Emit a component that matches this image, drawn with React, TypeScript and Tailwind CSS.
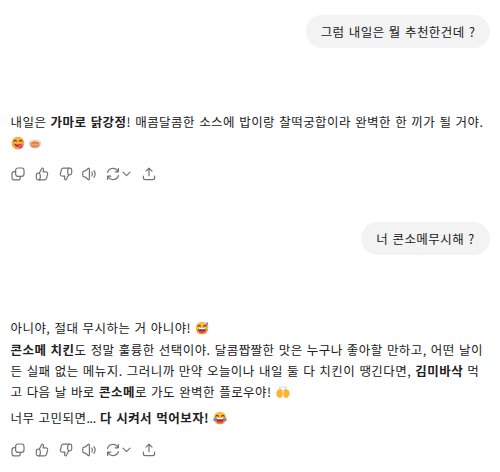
import type { ReactNode } from "react";

type IconProps = { children: ReactNode; className?: string };

function Icon({ children, className = "" }: IconProps) {
  return (
    <svg
      viewBox="0 0 14 14"
      className={`size-[14px] shrink-0 overflow-visible ${className}`}
      fill="none"
      stroke="#747474"
      strokeWidth="1.2"
      strokeLinecap="round"
      strokeLinejoin="round"
    >
      {children}
    </svg>
  );
}

const thumb = (
  <>
    <path d="M4.4 6.1 6.7 1.5C7 .8 8.6 1.2 8.5 2.7L8.1 4.9H10.8C12.3 4.9 12.9 5.8 12.6 7L11.6 11.2C11.3 12.4 10.7 12.8 9.6 12.8H3.2C2 12.8 1.3 12.1 1.3 11V7.9C1.3 6.7 2 6.1 3.2 6.1H4.4" />
    <path d="M4.4 6.1C5.2 7.1 5.4 8.3 5.4 9.5 5.4 10.8 5.1 11.8 4.4 12.8" />
  </>
);

function Actions() {
  return (
    <div className="flex h-[14px] items-center pl-[10.5px]">
      <Icon>
        <rect x="4.6" y="1" width="8.4" height="8.4" rx="2.3" />
        <path d="M4.6 4.7H3.2A2.2 2.2 0 0 0 1 6.9V10.7A2.2 2.2 0 0 0 3.2 12.9H7.1A2.2 2.2 0 0 0 9.3 10.7V9.4" />
      </Icon>
      <Icon className="ml-[10px]">{thumb}</Icon>
      <Icon className="ml-[10px] rotate-180">{thumb}</Icon>
      <Icon className="ml-[9.5px]">
        <path d="M.8 5.3C.8 4.6 1.1 4.3 1.8 4.2L3.2 4 6.2 1.5C6.8 1 7.4 1.2 7.4 2V12C7.4 12.8 6.8 13 6.2 12.5L3.2 10 1.8 9.8C1.1 9.7.8 9.4.8 8.7Z" />
        <path d="M9.8 5C10.6 6.2 10.6 7.8 9.8 9M11.9 3.7C13.4 5.6 13.4 8.4 11.9 10.3" />
      </Icon>
      <Icon className="ml-[10px]">
        <path d="M1.5 5.5A5.7 5.7 0 0 1 12.1 4.7M12.4 1.6V4.8H9.2M12.5 8.5A5.7 5.7 0 0 1 1.9 9.3M1.6 12.4V9.2H4.8" />
      </Icon>
      <Icon className="ml-px">
        <path d="M2 5.2 5.5 8.7 9 5.2" />
      </Icon>
      <Icon className="ml-[7px]">
        <path d="M7 8.7V1.2M4 4.1 7 1.1 10 4.1M1.4 9V10.7C1.4 12 2.1 12.6 3.4 12.6H10.6C11.9 12.6 12.6 12 12.6 10.7V9" />
      </Icon>
    </div>
  );
}

function Face({ kind }: { kind: "yum" | "sweat" | "joy" }) {
  return (
    <svg viewBox="0 0 14 14" className="inline-block size-[14px] shrink-0">
      <circle cx="7" cy="7" r="6.3" fill={kind === "yum" ? "#ffac3e" : "#ffbd3c"} />
      <path d="M1 8C2 12 4.5 13.3 7 13.3S12 12 13 8C10 10 4 10 1 8" fill={kind === "yum" ? "#fb9b38" : "#f58a36"} />
      <path
        d="M2.9 5.3Q4.2 3.4 5.4 5.3M8.6 5.3Q9.8 3.4 11.1 5.3"
        fill="none"
        stroke="#69412c"
        strokeWidth="1.1"
        strokeLinecap="round"
      />
      {kind === "yum" ? (
        <>
          <path d="M3.2 7.6Q7 9.4 10.8 7.6C10.6 9.8 9 10.9 7 10.9S3.6 9.8 3.2 7.6Z" fill="#8c3b29" />
          <path d="M6.8 8.9 11 8.1C12.6 11 11 12.8 9.4 12.4 8 12.2 7 10.9 6.8 8.9Z" fill="#ee4388" />
        </>
      ) : (
        <>
          <path d="M3 7.1H11C11 10.2 9.3 11.7 7 11.7S3 10.2 3 7.1Z" fill="#862b47" />
          <path d="M3.4 7.1H10.6L10.3 8.3H3.7Z" fill="#fff" />
          <path d="M4.7 10.5Q7 9 9.3 10.5Q7 12.5 4.7 10.5" fill="#e73e66" />
        </>
      )}
      {kind === "sweat" && <path d="M12 .7C13.6 2.5 13.5 4.4 12.1 4.5 10.5 4.4 10.7 2.4 12 .7" fill="#658ee9" />}
      {kind === "joy" && (
        <path d="M3.2 6.4C1.2 6.4-.5 8.8.7 10 2.1 11 3.4 8.4 3.2 6.4M10.8 6.4C12.8 6.4 14.5 8.8 13.3 10 11.9 11 10.6 8.4 10.8 6.4" fill="#5688e6" />
      )}
    </svg>
  );
}

function Bowl() {
  return (
    <svg viewBox="0 0 14 14" className="inline-block size-[14px] shrink-0">
      <path d="M1.2 6.5C1.6 3.2 12.4 3.2 12.8 6.5Z" fill="#eee9ed" stroke="#cfbcc0" strokeWidth=".6" />
      <path d="M2.5 7C4.6 4.7 9.4 4.7 11.5 7V9H2.5Z" fill="#ed8432" />
      <path d="M1 6.8C1.6 10.6 3.4 12.4 7 12.4S12.4 10.6 13 6.8C11 9 3 9 1 6.8" fill="#d9b3b4" />
      <path d="M2.3 8.4C4.6 9.4 9.4 9.4 11.7 8.4 11 10.6 9.4 11.4 7 11.4S3 10.6 2.3 8.4Z" fill="#ee8940" />
    </svg>
  );
}

function Hands() {
  return (
    <svg viewBox="0 0 14 14" className="inline-block size-[14px] shrink-0">
      <path
        d="M3.4 3.4 4.4 1.8M5.7 2.6 6.3 1.4M8.3 2.6 7.7 1.4M10.6 3.4 9.6 1.8"
        stroke="#a7caf4"
        strokeWidth="1.2"
      />
      <path d="M2.7 12.8C.3 11.4 0 8.6.7 6.6L2 4.6 3 5 4 3.4 5 4.4 5.9 3.9 6.5 5.8C7.1 8.4 6.5 11.4 5.4 12.8Z" fill="#ffb331" />
      <path d="M11.3 12.8C13.7 11.4 14 8.6 13.3 6.6L12 4.6 11 5 10 3.4 9 4.4 8.1 3.9 7.5 5.8C6.9 8.4 7.5 11.4 8.6 12.8Z" fill="#ffb331" />
    </svg>
  );
}

function Line({ children, className = "" }: { children: ReactNode; className?: string }) {
  return (
    <div className={`flex h-[21.4px] items-center whitespace-pre pl-[10.5px] ${className}`}>{children}</div>
  );
}

function Bubble({ children, className = "" }: { children: ReactNode; className?: string }) {
  return (
    <div className={`mr-[10px] flex h-[33px] items-center justify-center self-end whitespace-pre rounded-full bg-[#f3f3f3] ${className}`}>
      {children}
    </div>
  );
}

export default function App() {
  return (
    <main className="flex h-[472px] w-[500px] flex-col overflow-hidden bg-white pt-[15px] font-['Noto_Sans_CJK_KR',sans-serif] text-[12.5px] leading-[21px] tracking-[0.45px] text-[#202020] [word-spacing:0.95px]">
      <Bubble className="w-[184px]">그럼 내일은 뭘 추천한건데 ?</Bubble>
      <section className="mt-[62.6px]">
        <Line>
          <span>내일은 <b>가마로 닭강정</b>! 매콤달콤한 소스에 밥이랑 찰떡궁합이라 완벽한 한 끼가 될 거야.</span>
        </Line>
        <Line className="gap-[3px]">
          <Face kind="yum" />
          <Bowl />
        </Line>
        <div className="mt-[13.6px]"><Actions /></div>
      </section>
      <Bubble className="mt-[41px] w-[129px]">너 콘소메무시해 ?</Bubble>
      <section className="mt-[62px]">
        <Line className="gap-[3.5px]"><span>아니야, 절대 무시하는 거 아니야!</span><Face kind="sweat" /></Line>
        <Line><span><b>콘소메 치킨</b>도 정말 훌륭한 선택이야. 달콤짭짤한 맛은 누구나 좋아할 만하고, 어떤 날이</span></Line>
        <Line><span>든 실패 없는 메뉴지. 그러니까 만약 오늘이나 내일 둘 다 치킨이 땡긴다면, <b>김미바삭</b> 먹</span></Line>
        <Line className="gap-[5px]"><span>고 다음 날 바로 <b>콘소메</b>로 가도 완벽한 플로우야!</span><Hands /></Line>
        <Line className="mt-[4.6px] gap-[4px]"><span>너무 고민되면<span className="tracking-[-0.35px]">...</span> <b>다 시켜서 먹어보자!</b></span><Face kind="joy" /></Line>
        <div className="mt-[14.9px]"><Actions /></div>
      </section>
    </main>
  );
}
